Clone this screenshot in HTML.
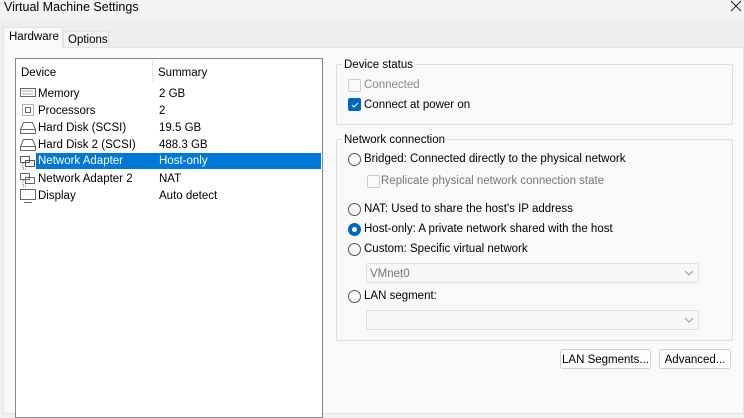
<!DOCTYPE html><html><head><style>
*{margin:0;padding:0;box-sizing:border-box}
body{width:744px;height:414px;overflow:hidden;background:#f0f0f0;font-family:"Liberation Sans",sans-serif;font-size:11.5px;color:#000;position:relative}
.a{position:absolute;white-space:nowrap}
.t{margin-top:2px}
.r{margin-top:1px}
.cb{position:absolute;width:13px;height:13px;border:1px solid #bdbdbd;border-radius:2px;background:#fafafa}
.rb{position:absolute;width:13px;height:13px;border:1px solid #555;border-radius:50%;background:#fafafa}
.grp{position:absolute;border:1px solid #dcdcdc;border-radius:2px}
.gl{position:absolute;background:#f9f9f9;padding:0 2px;margin-top:1px}
.combo{position:absolute;border:1px solid #e0e0e0;border-radius:2px;background:#f7f7f7;height:20px}
.btn{position:absolute;border:1px solid #cfcfcf;border-radius:3px;background:#fdfdfd;height:20px;text-align:center;line-height:20px}
</style></head><body>
<div class="a" style="left:0;top:0;width:744px;height:20px;background:#f3f3f3"></div>
<div class="a" style="left:4px;top:0;font-size:12.5px">Virtual Machine Settings</div>
<svg class="a" style="left:730px;top:0" width="12" height="12"><path d="M1 1L11 11M11 1L1 11" stroke="#222" stroke-width="1"/></svg>
<div class="a" style="left:0;top:20px;width:744px;height:27px;background:#eeeeee"></div>
<div class="a" style="left:3px;top:47px;width:741px;height:367px;background:#f9f9f9;border:1px solid #e3e3e3"></div>
<div class="a" style="left:3px;top:27px;width:60px;height:21px;background:#f9f9f9;border:1px solid #e3e3e3;border-bottom:none"></div>
<div class="a" style="left:9px;top:31px">Hardware</div>
<div class="a" style="left:63px;top:31px;width:46px;height:16px;background:#f3f3f3;border:1px solid #e3e3e3;border-bottom:none"></div>
<div class="a" style="left:68px;top:34px">Options</div>
<div class="a" style="left:15px;top:58px;width:308px;height:360px;background:#fff;border:1px solid #828790"></div>
<div class="a" style="left:152px;top:60px;width:1px;height:22px;background:#e5e5e5"></div>
<div class="a t" style="left:21px;top:65px">Device</div><div class="a t" style="left:158px;top:65px">Summary</div>
<div class="a" style="left:36px;top:153px;width:285px;height:16px;background:#0078d7"></div>
<div class="a t" style="left:38px;top:86px">Memory</div><div class="a t" style="left:159px;top:86px">2 GB</div>
<div class="a t" style="left:38px;top:103px">Processors</div><div class="a t" style="left:159px;top:103px">2</div>
<div class="a t" style="left:38px;top:120px">Hard Disk (SCSI)</div><div class="a t" style="left:159px;top:120px">19.5 GB</div>
<div class="a t" style="left:38px;top:137px">Hard Disk 2 (SCSI)</div><div class="a t" style="left:159px;top:137px">488.3 GB</div>
<div class="a t" style="left:38px;top:153px;color:#fff">Network Adapter</div><div class="a t" style="left:159px;top:153px;color:#fff">Host-only</div>
<div class="a t" style="left:38px;top:171px">Network Adapter 2</div><div class="a t" style="left:159px;top:171px">NAT</div>
<div class="a t" style="left:38px;top:188px">Display</div><div class="a t" style="left:159px;top:188px">Auto detect</div>
<svg class="a" style="left:19px;top:87px" width="18" height="120" fill="none" stroke="#666">
<rect x="1.5" y="1.5" width="15" height="8"/><path d="M3 4h11M3 7h11" stroke="#aaa"/>
<rect x="3.5" y="17.5" width="11" height="11" stroke-dasharray="1 1"/><rect x="6.5" y="20.5" width="5" height="5"/>
<path d="M1.5 42.5l3-7h9l3 7v4h-15z"/><path d="M1.5 42.5h15"/>
<path d="M1.5 59.5l3-7h9l3 7v4h-15z"/><path d="M1.5 59.5h15"/>
<rect x="1.5" y="69.5" width="9" height="6" stroke="#555"/><rect x="6.5" y="73.5" width="9" height="6" stroke="#555"/><path d="M4 76v6h3" stroke-dasharray="1 1"/>
<rect x="1.5" y="86.5" width="9" height="6"/><rect x="6.5" y="90.5" width="9" height="6"/><path d="M4 93v6h3" stroke-dasharray="1 1"/>
<rect x="1.5" y="102.5" width="15" height="10"/><path d="M5 115.5h8"/>
</svg>
<div class="grp" style="left:336px;top:64px;width:397px;height:61px"></div>
<div class="gl" style="left:342px;top:58px">Device status</div>
<div class="cb" style="left:348px;top:79px;border-color:#ccc"></div>
<div class="a r" style="left:364px;top:78px;color:#888">Connected</div>
<div class="cb" style="left:348px;top:98px;background:#0067c0;border-color:#0067c0"></div>
<svg class="a" style="left:350px;top:100px" width="10" height="10"><path d="M2 5l2 2 4-4" stroke="#fff" fill="none"/></svg>
<div class="a r" style="left:364px;top:98px">Connect at power on</div>
<div class="grp" style="left:336px;top:139px;width:397px;height:202px"></div>
<div class="gl" style="left:342px;top:133px">Network connection</div>
<div class="rb" style="left:348px;top:153px"></div><div class="a r" style="left:364px;top:152px">Bridged: Connected directly to the physical network</div>
<div class="cb" style="left:367px;top:175px;border-color:#ccc"></div><div class="a r" style="left:381px;top:174px;color:#777">Replicate physical network connection state</div>
<div class="rb" style="left:348px;top:203px"></div><div class="a r" style="left:364px;top:202px">NAT: Used to share the host's IP address</div>
<div class="rb" style="left:348px;top:223px;background:#0067c0;border-color:#0067c0"></div><div class="a" style="left:352px;top:227px;width:5px;height:5px;border-radius:50%;background:#fff"></div>
<div class="a r" style="left:364px;top:222px">Host-only: A private network shared with the host</div>
<div class="rb" style="left:348px;top:243px"></div><div class="a r" style="left:364px;top:242px">Custom: Specific virtual network</div>
<div class="combo" style="left:366px;top:263px;width:333px"></div><div class="a r" style="left:370px;top:267px;color:#777">VMnet0</div>
<svg class="a" style="left:684px;top:269px" width="10" height="8"><path d="M1 2l4 4 4-4" stroke="#999" fill="none"/></svg>
<div class="rb" style="left:348px;top:290px"></div><div class="a r" style="left:364px;top:289px">LAN segment:</div>
<div class="combo" style="left:366px;top:310px;width:333px"></div>
<svg class="a" style="left:684px;top:316px" width="10" height="8"><path d="M1 2l4 4 4-4" stroke="#999" fill="none"/></svg>
<div class="btn" style="left:560px;top:349px;width:91px">LAN Segments...</div>
<div class="btn" style="left:659px;top:349px;width:72px">Advanced...</div>
</body></html>
